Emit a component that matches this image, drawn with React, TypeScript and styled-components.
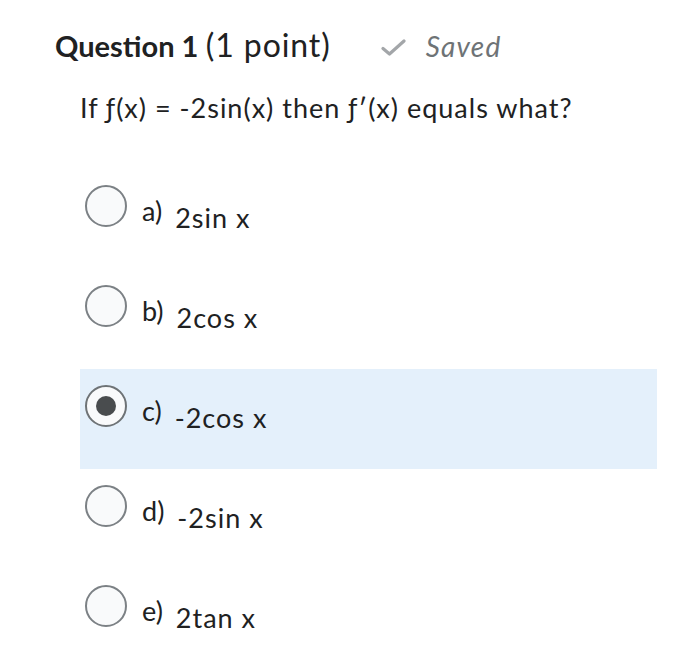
import React, { useState } from "react";
import styled, { createGlobalStyle } from "styled-components";

const GlobalStyle = createGlobalStyle`
  body {
    margin: 0;
    background: #ffffff;
    font-family: Lato, "Open Sans", sans-serif;
    color: #202122;
  }
`;

const options = [
  { key: "a", text: "2sin x" },
  { key: "b", text: "2cos x" },
  { key: "c", text: "-2cos x" },
  { key: "d", text: "-2sin x" },
  { key: "e", text: "2tan x" },
];

export default function App() {
  const [selected, setSelected] = useState("c");

  return (
    <Page>
      <GlobalStyle />
      <Header>
        <Title>
          <strong>Question 1</strong> <Points>(1 point)</Points>
        </Title>
        <SavedStatus>
          <svg width="25" height="17" viewBox="0 0 25 17">
            <path
              d="M2 9.5 L8.5 15 L23 2"
              fill="none"
              stroke="#a3a6a9"
              strokeWidth="3.2"
              strokeLinecap="round"
              strokeLinejoin="round"
            />
          </svg>
          <SavedText>Saved</SavedText>
        </SavedStatus>
      </Header>
      <QuestionText>If ƒ(x) = -2sin(x) then ƒ′(x) equals what?</QuestionText>
      <OptionList>
        {options.map((o) => (
          <OptionRow
            key={o.key}
            $selected={selected === o.key}
            onClick={() => setSelected(o.key)}
          >
            <Radio $selected={selected === o.key} />
            <Label>{o.key})</Label>
            <Answer>{o.text}</Answer>
          </OptionRow>
        ))}
      </OptionList>
    </Page>
  );
}

const Page = styled.div`
  padding: 27px 0 0 55px;
`;

const Header = styled.header`
  display: flex;
  align-items: baseline;
  gap: 50px;
`;

const Title = styled.h1`
  margin: 0;
  font-size: 29px;
  line-height: 35px;
  font-weight: 400;
  color: #202122;

  strong {
    font-weight: 700;
  }
`;

const Points = styled.span`
  font-size: 32px;
  letter-spacing: 0.9px;
`;

const SavedStatus = styled.div`
  display: flex;
  align-items: baseline;
  gap: 20px;

  svg {
    position: relative;
    top: -1px;
  }
`;

const SavedText = styled.span`
  font-size: 28px;
  font-style: italic;
  letter-spacing: 1.2px;
  color: #6e7376;
`;

const QuestionText = styled.p`
  margin: 29px 0 0 25px;
  font-size: 27px;
  line-height: 32px;
  letter-spacing: 1px;
  color: #202122;
`;

const OptionList = styled.div`
  margin: 45px 0 0 25px;
  width: 577px;
`;

const OptionRow = styled.div<{ $selected: boolean }>`
  display: flex;
  align-items: flex-start;
  height: 100px;
  box-sizing: border-box;
  padding: 16px 0 0 5px;
  background: ${(p) => (p.$selected ? "#e4f0fb" : "transparent")};
  cursor: pointer;
`;

const Radio = styled.span<{ $selected: boolean }>`
  position: relative;
  flex: none;
  width: 42px;
  height: 42px;
  box-sizing: border-box;
  border-radius: 50%;
  border: 2px solid ${(p) => (p.$selected ? "#6e7376" : "#7c8185")};
  background: #f9fafb;

  &::after {
    content: "";
    display: ${(p) => (p.$selected ? "block" : "none")};
    position: absolute;
    left: 9px;
    top: 9px;
    width: 20px;
    height: 20px;
    border-radius: 50%;
    background: #494c4e;
  }
`;

const Label = styled.span`
  margin: 10px 0 0 15px;
  font-size: 27px;
  line-height: 32px;
`;

const Answer = styled.span`
  margin: 17px 0 0 13px;
  font-size: 27px;
  line-height: 32px;
  letter-spacing: 1px;
`;
